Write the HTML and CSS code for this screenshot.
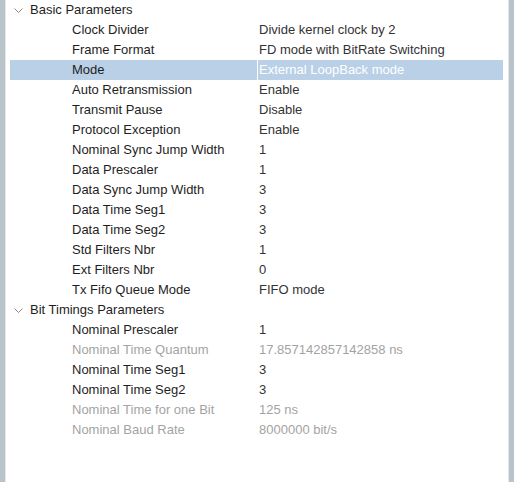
FILE: index.html
```html
<!DOCTYPE html>
<html>
<head>
    <title>Parameter Settings</title>
    <link rel="stylesheet" href="styles.css">
</head>
<body>
    <div class="panel">
        <div class="group">
            <div class="group-title">
                <svg class="chevron" width="9" height="5" viewBox="0 0 9 5"><path d="M0.5 0.5 L4.5 4.5 L8.5 0.5" fill="none" stroke="#8a8a8a" stroke-width="1"/></svg>
                Basic Parameters
            </div>
            <div class="row"><span class="name">Clock Divider</span><span class="value">Divide kernel clock by 2</span></div>
            <div class="row"><span class="name">Frame Format</span><span class="value">FD mode with BitRate Switching</span></div>
            <div class="row selected"><span class="name">Mode</span><span class="value">External LoopBack mode</span></div>
            <div class="row"><span class="name">Auto Retransmission</span><span class="value">Enable</span></div>
            <div class="row"><span class="name">Transmit Pause</span><span class="value">Disable</span></div>
            <div class="row"><span class="name">Protocol Exception</span><span class="value">Enable</span></div>
            <div class="row"><span class="name">Nominal Sync Jump Width</span><span class="value">1</span></div>
            <div class="row"><span class="name">Data Prescaler</span><span class="value">1</span></div>
            <div class="row"><span class="name">Data Sync Jump Width</span><span class="value">3</span></div>
            <div class="row"><span class="name">Data Time Seg1</span><span class="value">3</span></div>
            <div class="row"><span class="name">Data Time Seg2</span><span class="value">3</span></div>
            <div class="row"><span class="name">Std Filters Nbr</span><span class="value">1</span></div>
            <div class="row"><span class="name">Ext Filters Nbr</span><span class="value">0</span></div>
            <div class="row"><span class="name">Tx Fifo Queue Mode</span><span class="value">FIFO mode</span></div>
        </div>
        <div class="group">
            <div class="group-title">
                <svg class="chevron" width="9" height="5" viewBox="0 0 9 5"><path d="M0.5 0.5 L4.5 4.5 L8.5 0.5" fill="none" stroke="#8a8a8a" stroke-width="1"/></svg>
                Bit Timings Parameters
            </div>
            <div class="row"><span class="name">Nominal Prescaler</span><span class="value">1</span></div>
            <div class="row readonly"><span class="name">Nominal Time Quantum</span><span class="value">17.857142857142858 ns</span></div>
            <div class="row"><span class="name">Nominal Time Seg1</span><span class="value">3</span></div>
            <div class="row"><span class="name">Nominal Time Seg2</span><span class="value">3</span></div>
            <div class="row readonly"><span class="name">Nominal Time for one Bit</span><span class="value">125 ns</span></div>
            <div class="row readonly"><span class="name">Nominal Baud Rate</span><span class="value">8000000 bit/s</span></div>
        </div>
    </div>
</body>
</html>
```

FILE: styles.css
```css
html, body { margin: 0; padding: 0; background: #fff; }
body { font-family: "Liberation Sans", Arial, sans-serif; font-size: 13px; color: #1e1e1e; }
.panel {
    height: 482px;
    box-sizing: border-box;
    border-left: 5px solid #b9c3ca;
    border-right: 5px solid #b9c3ca;
    box-shadow: inset 1px 0 0 #e4e8eb, inset -1px 0 0 #e4e8eb;
    padding: 0 6px 0 5px;
    overflow: hidden;
}
.group-title { height: 20px; line-height: 20px; display: flex; align-items: center; }
.chevron { margin: 1px 7px 0 4px; }
.row { display: grid; grid-template-columns: 247px 1px 1fr; height: 20px; line-height: 20px; }
.row::before { content: ""; grid-column: 2; grid-row: 1; }
.name { grid-column: 1; grid-row: 1; padding-left: 62px; white-space: nowrap; }
.value { grid-column: 3; grid-row: 1; padding-left: 1px; color: #333; white-space: nowrap; }
.selected { background: #b9d0e7; }
.selected::before { background: #fff; }
.selected .value { color: #fff; }
.readonly .name, .readonly .value { color: #a3a3a3; }
```
